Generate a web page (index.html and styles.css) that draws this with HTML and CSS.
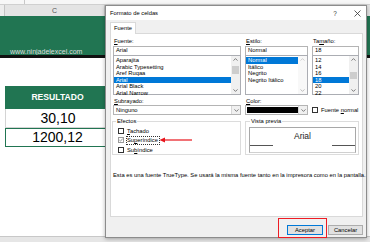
FILE: index.html
```html
<!DOCTYPE html>
<html lang="es">
<head>
<meta charset="utf-8">
<title>Formato de celdas</title>
<link rel="stylesheet" href="styles.css">
</head>
<body>
<div class="sheet">
  <div class="topstrip"><span class="namebox"></span></div>
  <div class="colhead"><span class="corner"></span><span class="col">C</span><span class="col"></span></div>
  <div class="banner"><span class="site">www.ninjadelexcel.com</span></div>
  <div class="rule"></div>
  <div class="table">
    <div class="th">RESULTADO</div>
    <div class="td">30,10</div>
    <div class="td sel">1200,12</div>
  </div>
  <div class="statusbar"></div>
</div>

<div class="dialog">
  <div class="titlebar">
    <span class="title">Formato de celdas</span>
    <span class="help">?</span>
    <span class="close"><svg width="7" height="7" viewBox="0 0 7 7"><path d="M0.5 0.5 L6.5 6.5 M6.5 0.5 L0.5 6.5" stroke="#333" stroke-width="0.8" fill="none"/></svg></span>
  </div>
  <div class="dbody">
    <div class="tabs"><div class="tab">Fuente</div></div>
    <div class="panel">
      <div class="grid">
        <div class="field">
          <div class="lbl"><u>F</u>uente:</div>
          <div class="input">Arial</div>
          <div class="list">
            <div class="items">
              <div>Aparajita</div>
              <div>Arabic Typesetting</div>
              <div>Aref Ruqaa</div>
              <div class="on">Arial</div>
              <div>Arial Black</div>
              <div>Arial Narrow</div>
            </div>
            <div class="vscroll">
              <span class="arr"><svg width="5" height="3" viewBox="0 0 5 3"><path d="M0.5 2.6 L2.5 0.6 L4.5 2.6" stroke="#606060" stroke-width="0.8" fill="none"/></svg></span>
              <span class="track"><span class="thumb thumb-f"></span></span>
              <span class="arr"><svg width="5" height="3" viewBox="0 0 5 3"><path d="M0.5 0.4 L2.5 2.4 L4.5 0.4" stroke="#606060" stroke-width="0.8" fill="none"/></svg></span>
            </div>
          </div>
        </div>
        <div class="field">
          <div class="lbl"><u>E</u>stilo:</div>
          <div class="input">Normal</div>
          <div class="list">
            <div class="items">
              <div class="on">Normal</div>
              <div>Itálico</div>
              <div>Negrito</div>
              <div>Negrito Itálico</div>
            </div>
            <div class="vscroll off">
              <span class="arr"><svg width="5" height="3" viewBox="0 0 5 3"><path d="M0.5 2.6 L2.5 0.6 L4.5 2.6" stroke="#c4c4c4" stroke-width="0.8" fill="none"/></svg></span>
              <span class="track"></span>
              <span class="arr"><svg width="5" height="3" viewBox="0 0 5 3"><path d="M0.5 0.4 L2.5 2.4 L4.5 0.4" stroke="#b0b0b0" stroke-width="0.8" fill="none"/></svg></span>
            </div>
          </div>
        </div>
        <div class="field">
          <div class="lbl">Ta<u>m</u>año:</div>
          <div class="input">18</div>
          <div class="list">
            <div class="items">
              <div>12</div>
              <div>14</div>
              <div>16</div>
              <div class="on">18</div>
              <div>20</div>
              <div>22</div>
            </div>
            <div class="vscroll">
              <span class="arr"><svg width="5" height="3" viewBox="0 0 5 3"><path d="M0.5 2.6 L2.5 0.6 L4.5 2.6" stroke="#606060" stroke-width="0.8" fill="none"/></svg></span>
              <span class="track"><span class="thumb thumb-t"></span></span>
              <span class="arr"><svg width="5" height="3" viewBox="0 0 5 3"><path d="M0.5 0.4 L2.5 2.4 L4.5 0.4" stroke="#606060" stroke-width="0.8" fill="none"/></svg></span>
            </div>
          </div>
        </div>

        <div class="field row2">
          <div class="lbl sm"><u>S</u>ubrayado:</div>
          <div class="combo">
            <span class="ctext">Ninguno</span>
            <span class="carr"><svg width="5" height="3" viewBox="0 0 5 3"><path d="M0.5 0.4 L2.5 2.4 L4.5 0.4" stroke="#606060" stroke-width="0.8" fill="none"/></svg></span>
          </div>
        </div>
        <div class="field row2">
          <div class="lbl sm"><u>C</u>olor:</div>
          <div class="combo">
            <span class="swatch"></span>
            <span class="carr"><svg width="5" height="3" viewBox="0 0 5 3"><path d="M0.5 0.4 L2.5 2.4 L4.5 0.4" stroke="#606060" stroke-width="0.8" fill="none"/></svg></span>
          </div>
        </div>
        <div class="field row2">
          <div class="chkline"><span class="box"></span><span>Fuente <u>n</u>ormal</span></div>
        </div>

        <fieldset class="grp effects">
          <legend>Efectos</legend>
          <div class="effects-in">
            <div class="crow"><span class="box"></span><span><u>T</u>achado</span></div>
            <div class="crow"><span class="box chk"><svg width="4" height="4" viewBox="0 0 4 4"><path d="M0.3 2 L1.5 3.2 L3.7 0.6" stroke="#808080" stroke-width="0.8" fill="none"/></svg></span><span class="focus">Su<u>p</u>eríndice</span></div>
            <div class="crow"><span class="box"></span><span>Su<u>b</u>índice</span></div>
          </div>
        </fieldset>
        <fieldset class="grp preview">
          <legend>Vista previa</legend>
          <div class="pvwrap">
            <div class="pv">
              <div class="pv-text">Arial</div>
              <div class="pv-base"><span></span><span></span></div>
            </div>
          </div>
        </fieldset>
      </div>
      <p class="note">Esta es una fuente TrueType. Se usará la misma fuente tanto en la impresora como en la pantalla.</p>
    </div>
    <div class="buttons">
      <button class="btn default">Aceptar</button>
      <button class="btn">Cancelar</button>
    </div>
  </div>
</div>

<div class="mark-rect"></div>
<svg class="mark-arrow" width="34" height="8" viewBox="0 0 34 8"><path d="M33 4 L4 4" stroke="#e8141c" stroke-width="1.2" fill="none"/><path d="M0.5 4 L6 1.4 L6 6.6 Z" fill="#e8141c"/></svg>
</body>
</html>
```

FILE: styles.css
```css
* { box-sizing: border-box; }
html, body { margin: 0; padding: 0; }
body {
  width: 370px;
  height: 242px;
  overflow: hidden;
  position: relative;
  background: #fff;
  font-family: "Liberation Sans", Arial, sans-serif;
}

/* ---------- spreadsheet background ---------- */
.sheet { height: 242px; display: flex; flex-direction: column; }
.topstrip { height: 4px; background: #f7f7f7; display: flex; }
.namebox { width: 25px; border-right: 1px solid #c8c8c8; }
.colhead {
  height: 12px;
  background: #e4e4e4;
  border-top: 1px solid #d0d0d0;
  display: flex;
  font-size: 7px;
  line-height: 11px;
  color: #555;
}
.corner { width: 5px; background: #ededed; border-right: 1px solid #c4c4c4; }
.col { width: 100px; text-align: center; border-right: 1px solid #c4c4c4; }
.banner {
  height: 39px;
  background: #217552;
  display: flex;
  align-items: flex-end;
  padding-left: 10px;
}
.site { font-size: 7px; line-height: 7px; color: #dcdcdc; margin-bottom: 0; }
.rule { height: 3px; background: #111; }
.table { margin: 28px 0 0 5px; width: 105px; }
.th {
  height: 23px;
  background: #217552;
  color: #fff;
  font-weight: bold;
  font-size: 8.6px;
  line-height: 23px;
  text-align: center;
}
.td {
  height: 19px;
  line-height: 19px;
  font-size: 14px;
  color: #000;
  text-align: center;
  border-left: 1px solid #d4d4d4;
  border-bottom: 1px solid #d4d4d4;
}
.td.sel { border: 1px solid #217552; height: 19px; line-height: 17px; }
.statusbar { margin-top: auto; height: 6px; background: #e6e6e6; border-top: 1px solid #c8c8c8; }

/* ---------- dialog ---------- */
.dialog {
  position: absolute;
  left: 105px;
  top: 5px;
  width: 262px;
  height: 233px;
  background: #f0f0f0;
  border: 1px solid #8c8c8c;
  box-shadow: 0 1px 4px rgba(0, 0, 0, 0.3);
  display: flex;
  flex-direction: column;
  font-family: "Liberation Sans", Arial, sans-serif;
  font-size: 5.8px;
  color: #000;
}
.titlebar { height: 14px; background: #fff; display: flex; align-items: center; padding-left: 4px; }
.title { flex: 1; font-size: 5.8px; }
.help { width: 26px; text-align: center; font-size: 6.4px; color: #333; }
.close { width: 18px; height: 14px; display: flex; align-items: center; justify-content: center; }
.close svg { display: block; }

.dbody { flex: 1; padding: 2px 3px 0 4px; display: flex; flex-direction: column; }
.tabs { height: 11px; display: flex; }
.tab {
  position: relative;
  z-index: 1;
  width: 26px;
  height: 12px;
  background: #fff;
  border: 1px solid #d9d9d9;
  border-bottom: none;
  padding-left: 3px;
  line-height: 11px;
}
.panel {
  height: 184px;
  background: #fff;
  border: 1px solid #d9d9d9;
  padding: 3px 3px 0 2px;
}
.grid { display: grid; grid-template-columns: 128px 63px 47px; column-gap: 4px; }
.field { min-width: 0; }
.lbl { height: 9px; line-height: 9px; padding-left: 1px; }
.lbl.sm { height: 8px; line-height: 8px; }
.row2 { margin-top: 2px; }
.input {
  height: 9px;
  line-height: 7px;
  border: 1px solid #b4b4b4;
  border-bottom: none;
  padding-left: 2px;
  background: #fff;
}
.list { height: 40px; border: 1px solid #abadb3; display: flex; background: #fff; }
.items { flex: 1; min-width: 0; padding-top: 1px; }
.items div { height: 6.5px; line-height: 6.5px; padding-left: 2px; white-space: nowrap; overflow: hidden; }
.items .on { background: #0078d7; color: #fff; }
.vscroll { width: 9px; background: #f0f0f0; display: flex; flex-direction: column; }
.vscroll.off { background: #f8f8f8; }
.arr { height: 7px; display: flex; align-items: center; justify-content: center; }
.arr svg, .carr svg { display: block; }
.track { flex: 1; display: flex; flex-direction: column; padding: 0 1px; }
.thumb { display: block; background: #cdcdcd; }
.thumb-f { margin-top: 3px; height: 8px; }
.thumb-t { margin-top: 9px; height: 7px; }

.combo { height: 10px; display: flex; border: 1px solid #b4b4b4; background: #fff; }
.ctext { flex: 1; padding-left: 2px; line-height: 8px; }
.swatch { flex: 1; background: #000; margin: 1px 0 1px 1px; }
.carr {
  width: 9px;
  background: #f0f0f0;
  border-left: 1px solid #d6d6d6;
  display: flex;
  align-items: center;
  justify-content: center;
}
.chkline { margin-top: 8px; height: 10px; display: flex; align-items: center; white-space: nowrap; }
.box {
  width: 6px;
  height: 6px;
  flex: none;
  border: 1px solid #333;
  background: #fff;
  margin-right: 3px;
  display: flex;
  align-items: center;
  justify-content: center;
}
.box.chk { border-color: #9a9a9a; }
.box svg { display: block; }

.grp {
  margin: 3px 0 0;
  border: 1px solid #dcdcdc;
  padding: 0;
  min-width: 0;
  height: 37px;
}
.grp legend { padding: 0 1px; height: 7px; line-height: 7px; font-size: 5.8px; }
.effects { margin-left: -1px; }
.effects legend { margin-left: 3px; }
.effects-in { padding: 1px 0 0 5px; }
.crow { height: 9.5px; display: flex; align-items: center; white-space: nowrap; }
.focus {
  line-height: 7px;
  padding: 0 1px 0 0;
  color: #000;
  outline: 1px dotted #333;
  outline-offset: 0;
}
.preview { grid-column: 2 / 4; }
.preview legend { margin-left: 4px; }
.pvwrap { padding: 2px 2px 0 3px; }
.pv { height: 26px; background: #fff; border: 1px solid #a8a8a8; border-bottom-color: #d0d0d0; }
.pv-text { height: 16px; line-height: 16px; text-align: center; font-size: 8.5px; color: #222; }
.pv-base { display: flex; justify-content: space-between; margin-top: 1px; }
.pv-base span { width: 23px; border-top: 1px solid #555; }

.note { margin: 16.5px 0 0; line-height: 7px; white-space: nowrap; }

.buttons { display: flex; justify-content: flex-end; gap: 5px; margin-top: 8px; }
.btn {
  width: 35px;
  height: 10px;
  padding: 0;
  font: inherit;
  color: #000;
  line-height: 8px;
  background: #e1e1e1;
  border: 1px solid #adadad;
}
.btn.default { width: 36px; border-color: #0078d7; }

/* ---------- red annotations (overlay) ---------- */
.mark-rect {
  position: absolute;
  left: 278px;
  top: 218px;
  width: 49px;
  height: 20px;
  border: 1.5px solid #ee1c24;
}
.mark-arrow { position: absolute; left: 159px; top: 136px; }
```
